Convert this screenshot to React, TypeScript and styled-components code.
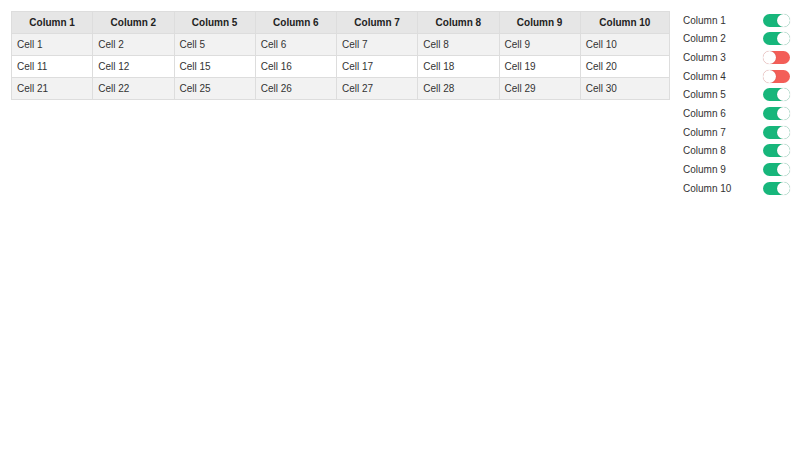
import React, { useState } from "react";
import styled, { createGlobalStyle } from "styled-components";

const GlobalStyle = createGlobalStyle`
	html, body {
		margin: 0;
		padding: 0;
		background: #ffffff;
	}
	body {
		font-family: "Liberation Sans", Arial, sans-serif;
		color: #333333;
	}
`;

const Page = styled.div`
	display: flex;
	align-items: flex-start;
	padding: 11px;
	gap: 13px;
`;

const Table = styled.table`
	flex: 1 1 auto;
	border-collapse: collapse;
	table-layout: fixed;
	font-size: 10px;
	th, td {
		border: 1px solid #dddddd;
		height: 22px;
		padding: 0 5px;
		box-sizing: border-box;
		line-height: 12px;
	}
	th {
		background: #e6e6e6;
		font-weight: bold;
		text-align: center;
		color: #222222;
	}
	td {
		text-align: left;
	}
	tbody tr:nth-child(odd) td {
		background: #f2f2f2;
	}
	tbody tr:nth-child(even) td {
		background: #ffffff;
	}
`;

const Sidebar = styled.div`
	flex: 0 0 106px;
	display: flex;
	flex-direction: column;
`;

const ToggleRow = styled.label`
	display: flex;
	align-items: center;
	justify-content: space-between;
	height: 18.67px;
	font-size: 10px;
	color: #333333;
	cursor: pointer;
`;

const Track = styled.span<{ $on: boolean }>`
	position: relative;
	display: inline-block;
	width: 27px;
	height: 13px;
	margin-right: -1px;
	border-radius: 7px;
	background: ${(p) => (p.$on ? "#17b67b" : "#f35e58")};
	&::after {
		content: "";
		position: absolute;
		top: 0;
		left: ${(p) => (p.$on ? "14px" : "0")};
		width: 13px;
		height: 13px;
		border-radius: 50%;
		background: #ffffff;
		box-shadow: 0 0 1px rgba(0, 0, 0, 0.25);
	}
`;

const allColumns = [1, 2, 3, 4, 5, 6, 7, 8, 9, 10];

const App: React.FC = () => {
	const [visible, setVisible] = useState<Record<number, boolean>>(() => {
		const v: Record<number, boolean> = {};
		allColumns.forEach((c) => (v[c] = c !== 3 && c !== 4));
		return v;
	});

	const shown = allColumns.filter((c) => visible[c]);
	const rows = [0, 10, 20];

	return (
		<>
			<GlobalStyle />
			<Page>
				<Table>
					<thead>
						<tr>
							{shown.map((c) => (
								<th key={c}>Column {c}</th>
							))}
						</tr>
					</thead>
					<tbody>
						{rows.map((base) => (
							<tr key={base}>
								{shown.map((c) => (
									<td key={c}>Cell {base + c}</td>
								))}
							</tr>
						))}
					</tbody>
				</Table>
				<Sidebar>
					{allColumns.map((c) => (
						<ToggleRow key={c} onClick={() => setVisible({ ...visible, [c]: !visible[c] })}>
							<span>Column {c}</span>
							<Track $on={visible[c]} />
						</ToggleRow>
					))}
				</Sidebar>
			</Page>
		</>
	);
};

export default App;
